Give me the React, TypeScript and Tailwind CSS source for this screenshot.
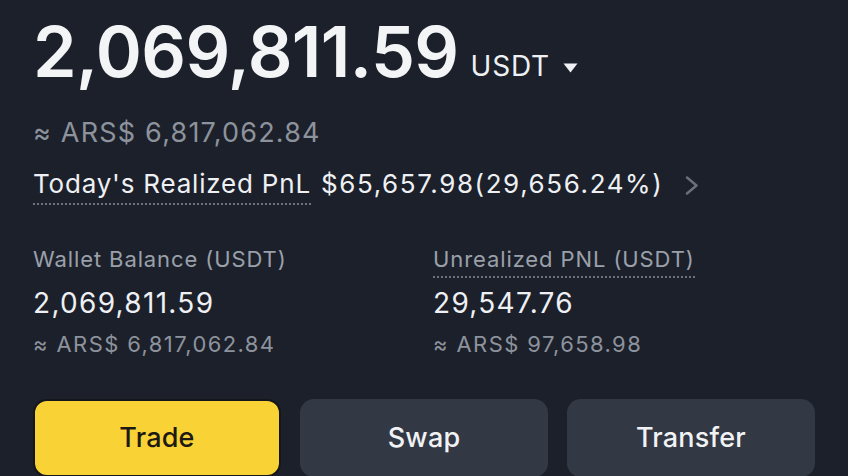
const font = { fontFamily: "Inter, 'Open Sans', sans-serif" }

function Stat({ label, value, fiat, dotted }: { label: string; value: string; fiat: string; dotted?: boolean }) {
  return (
    <div className="flex flex-col">
      <div className="h-[30px]">
        <span
          className={
            "text-[22px] leading-[28px] tracking-[0.9px] text-[#9aa0aa] " +
            (dotted ? "border-b-2 border-dotted border-[#6b7280] pb-[4px]" : "")
          }
        >
          {label}
        </span>
      </div>
      <div className="mt-[11px] text-[28px] leading-[34px] tracking-[1.3px] text-[#eef0f3]">{value}</div>
      <div className="mt-[10px] text-[22px] leading-[28px] tracking-[1.4px] text-[#8d939d]">{fiat}</div>
    </div>
  )
}

export default function App() {
  return (
    <div className="w-[848px] h-[476px] overflow-hidden bg-[#1c202a]" style={font}>
      <div className="pl-[33px] pt-[15px]">
        <div className="flex items-end">
          <span className="text-[70px] leading-[74px] font-semibold text-[#f3f4f6] tracking-[-0.6px]">2,069,811.59</span>
          <span className="ml-[12px] mb-[7px] text-[28px] leading-[32px] tracking-[0.8px] text-[#eef0f3]">USDT</span>
          <svg className="ml-[13px] mb-[16px]" width="15" height="10" viewBox="0 0 15 10">
            <path d="M0.5 0.5h14L7.5 9.5z" fill="#eef0f3" />
          </svg>
        </div>

        <div className="mt-[29px] text-[27px] leading-[30px] tracking-[1.2px] text-[#8d939d]">≈ ARS$ 6,817,062.84</div>

        <div className="mt-[20px] flex items-center">
          <span className="text-[26px] leading-[32px] tracking-[0.8px] text-[#eef0f3] border-b-2 border-dotted border-[#6b7280] pb-[3px]">
            Today's Realized PnL
          </span>
          <span className="ml-[10px] -mt-[5px] text-[26px] leading-[32px] tracking-[1.6px] text-[#eef0f3]">
            $65,657.98(29,656.24%)
          </span>
          <svg className="ml-[22px] -mt-[2px]" width="14" height="19" viewBox="0 0 14 19">
            <path d="M2 1.5l9.5 8-9.5 8" fill="none" stroke="#6b717c" strokeWidth="2.4" strokeLinecap="round" strokeLinejoin="round" />
          </svg>
        </div>

        <div className="mt-[40px] grid grid-cols-[400px_1fr]">
          <Stat label="Wallet Balance (USDT)" value="2,069,811.59" fiat="≈ ARS$ 6,817,062.84" />
          <Stat label="Unrealized PNL (USDT)" value="29,547.76" fiat="≈ ARS$ 97,658.98" dotted />
        </div>
      </div>

      <div className="mt-[41px] pl-[33px] flex gap-[19px]">
        <button className="w-[248px] h-[78px] rounded-[14px] bg-[#f9d236] text-[#1c1a12] text-[27px] font-medium tracking-[0.2px] border-2 border-[#14161c]">
          Trade
        </button>
        <button className="w-[248px] h-[78px] rounded-[14px] bg-[#333845] text-[#f1f2f4] text-[27px] font-medium tracking-[0.2px]">
          Swap
        </button>
        <button className="w-[248px] h-[78px] rounded-[14px] bg-[#333845] text-[#f1f2f4] text-[27px] font-medium tracking-[0.2px]">
          Transfer
        </button>
      </div>
    </div>
  )
}
